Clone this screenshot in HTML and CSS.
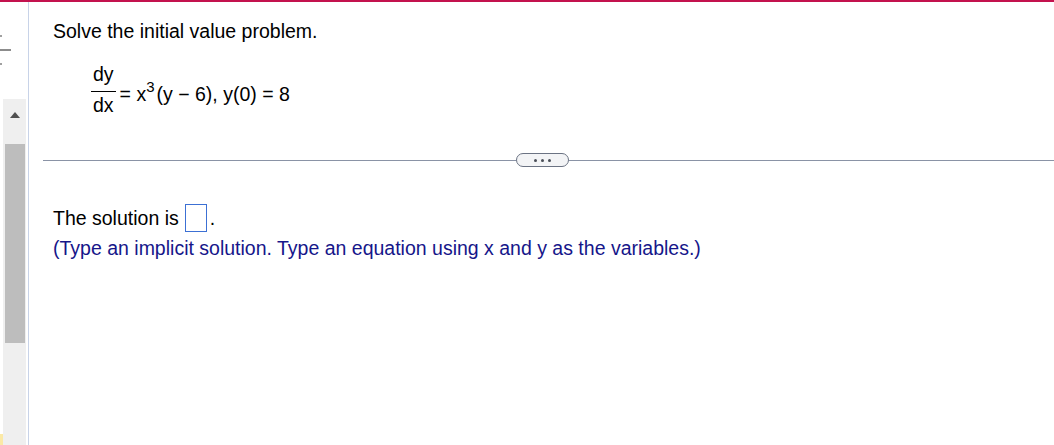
FILE: index.html
```html
<!DOCTYPE html>
<html>
<head>
<meta charset="utf-8">
<link rel="stylesheet" href="styles.css">
</head>
<body>
<div class="topbar"></div>
<div class="layout">
  <aside class="side">
    <div class="side-icon">
      <span class="dot"></span>
      <span class="dash"></span>
      <span class="dot"></span>
    </div>
    <div class="track">
      <div class="arrow"></div>
      <div class="thumb"></div>
    </div>
    <div class="note"></div>
  </aside>
  <main class="main">
    <div class="question">
      <p class="prompt">Solve the initial value problem.</p>
      <div class="equation">
        <span class="frac"><span class="num">dy</span><span class="den">dx</span></span>
        <span class="rhs">= x<sup class="sup">3</sup>(y − 6), y(0) = 8</span>
      </div>
    </div>
    <div class="divider">
      <span class="rule"></span>
      <button class="more"><span></span><span></span><span></span></button>
      <span class="rule"></span>
    </div>
    <div class="answer">
      <p class="sol">The solution is <span class="box"></span>.</p>
      <p class="hint">(Type an implicit solution. Type an equation using x and y as the variables.)</p>
    </div>
  </main>
</div>
</body>
</html>
```
FILE: styles.css
```css
html, body {
  margin: 0;
  padding: 0;
  background: #fff;
  font-family: "Liberation Sans", Arial, sans-serif;
  color: #000;
}
.topbar {
  height: 2px;
  background: #c3124e;
}
.layout {
  display: flex;
  height: 443px;
}
.side {
  width: 28px;
  border-right: 1px solid #c8d3e8;
  display: flex;
  flex-direction: column;
  position: relative;
}
.side-icon {
  height: 97px;
  flex: 0 0 97px;
  display: flex;
  flex-direction: column;
  align-items: flex-start;
  padding-top: 33px;
  box-sizing: border-box;
}
.side-icon .dot {
  display: block;
  width: 2px;
  height: 2px;
  background: #a0a0a0;
}
.side-icon .dash {
  display: block;
  width: 11px;
  height: 2px;
  background: #8c8c8c;
  margin: 12px 0;
}
.track {
  margin-left: 3px;
  width: 23px;
  flex: 1;
  background: #efefef;
  display: flex;
  flex-direction: column;
  align-items: center;
  padding-top: 13px;
  box-sizing: border-box;
}
.arrow {
  width: 0;
  height: 0;
  border-left: 5px solid transparent;
  border-right: 5px solid transparent;
  border-bottom: 6px solid #505050;
}
.thumb {
  width: 20px;
  height: 199px;
  background: #bdbdbd;
  margin-top: 26px;
}
.note {
  position: absolute;
  left: 0;
  bottom: 0;
  width: 3px;
  height: 11px;
  background: #fbe9a6;
}
.main {
  flex: 1;
  padding-left: 14px;
}
.question {
  padding-left: 10px;
  padding-top: 18px;
}
.prompt {
  margin: 0;
  font-size: 19.5px;
  line-height: 22px;
}
.equation {
  display: flex;
  align-items: center;
  margin-top: 21px;
  margin-left: 37px;
  font-size: 19.5px;
}
.frac {
  display: inline-flex;
  flex-direction: column;
  align-items: center;
  padding: 0 1px;
}
.num {
  line-height: 22px;
  border-bottom: 1px solid #000;
  padding: 0 2px 6px;
}
.den {
  line-height: 22px;
  padding-top: 2px;
}
.rhs {
  margin-left: 3px;
  margin-top: 9px;
}
.sup {
  font-size: 15px;
  vertical-align: 9px;
  line-height: 0;
  margin-right: 2px;
}
.divider {
  display: flex;
  align-items: center;
  margin-top: 37px;
  height: 14px;
}
.rule {
  flex: 1;
  height: 1px;
  background: #8a93a6;
}
.rule:first-child {
  flex: 0 0 473px;
}
.more {
  width: 53px;
  height: 14px;
  border: 1px solid #6b7383;
  border-radius: 7px;
  background: #f3f4f6;
  padding: 0;
  display: flex;
  align-items: center;
  justify-content: center;
  gap: 4px;
  box-sizing: border-box;
}
.more span {
  width: 3px;
  height: 3px;
  border-radius: 50%;
  background: #4a4f58;
}
.answer {
  padding-left: 10px;
  padding-top: 37px;
}
.sol {
  margin: 0;
  font-size: 19.5px;
  line-height: 28px;
  display: flex;
  align-items: center;
}
.box {
  display: inline-block;
  width: 22px;
  height: 28px;
  border: 1px solid #3c70d4;
  margin: 0 3px 0 6px;
  box-sizing: border-box;
}
.hint {
  margin: 4px 0 0;
  font-size: 19.5px;
  line-height: 24px;
  color: #16168a;
}
```
